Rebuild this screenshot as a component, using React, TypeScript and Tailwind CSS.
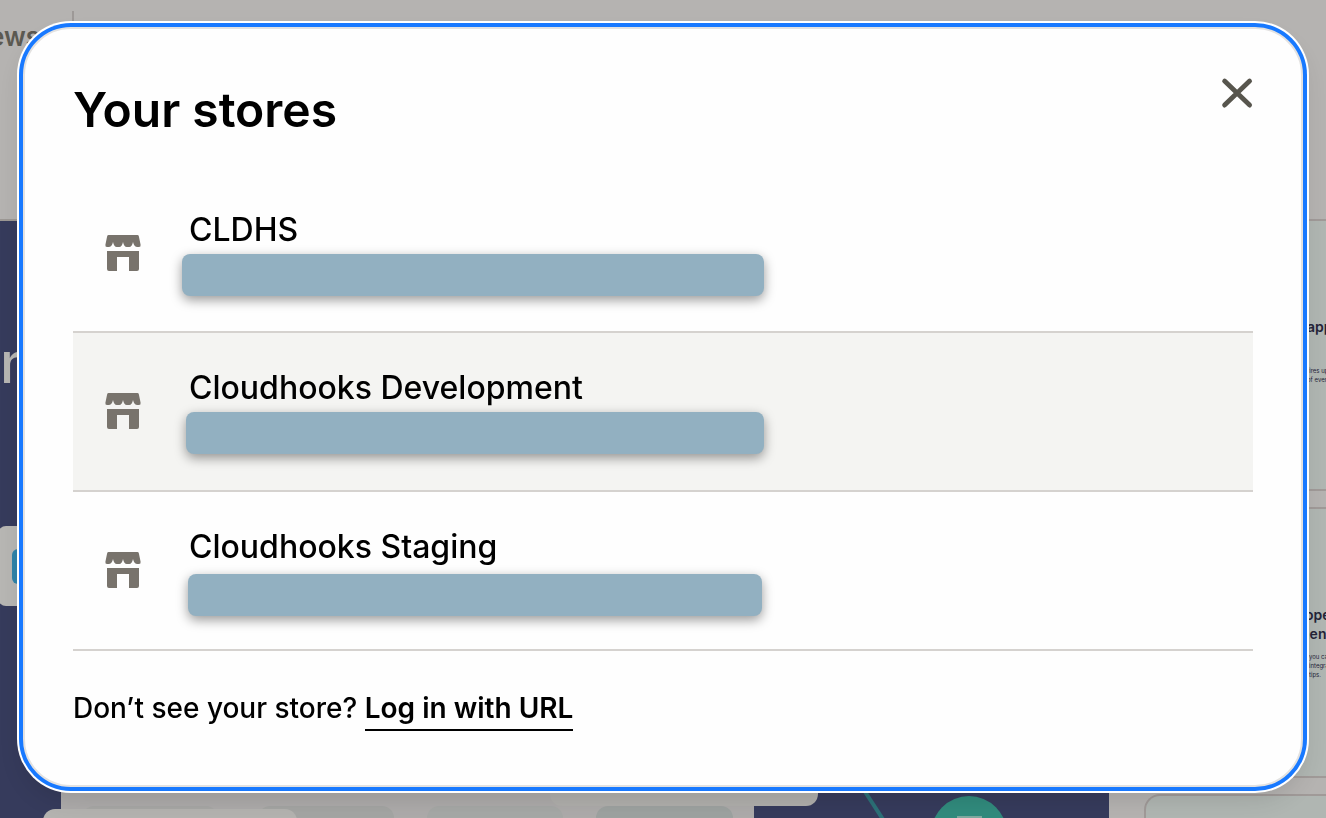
const stores = [
  { name: "CLDHS", row: "h-[156px]", bar: "mt-1 w-[582px]" },
  { name: "Cloudhooks Development", row: "h-[157px] bg-[#f4f4f2]", bar: "mt-1 ml-1 w-[578px]" },
  { name: "Cloudhooks Staging", row: "h-[157px]", bar: "mt-[7px] ml-[6px] w-[574px]" },
];

function StoreIcon() {
  return (
    <svg className="size-9 shrink-0" viewBox="0 0 36 36" fill="#78736c" aria-hidden="true">
      <path d="M3.6 0H32.4Q33.6 0 33.9 1.4L35.6 9.8Q36 12 34 12H32.5Q29 12 28 7Q27 12 24.2 12H21.8Q19 12 18 7Q17 12 14.2 12H11.8Q9 12 8 7Q7 12 3.5 12H2Q0 12 .4 9.8L2.1 1.4Q2.4 0 3.6 0Z" />
      <path d="M2 16H34V34Q34 36 32 36H24V22H12V36H4Q2 36 2 34Z" />
    </svg>
  );
}

function CloseIcon() {
  return (
    <svg className="size-8" viewBox="0 0 32 32" fill="none" stroke="#57554d" strokeWidth="4.8" strokeLinecap="round" aria-hidden="true">
      <path d="M3.6 4.1 28.6 28.1M28.6 4.1 3.6 28.1" />
    </svg>
  );
}

function HeroArt() {
  return (
    <svg className="absolute top-0 left-0 h-full w-[1109px]" viewBox="0 0 1109 597" preserveAspectRatio="xMinYMin slice" aria-hidden="true">
      <rect x="-2" y="305" width="100" height="80" rx="8" fill="#b7b6b3" />
      <rect x="12" y="328" width="60" height="35" rx="6" fill="#2f83a8" />
      <rect x="61" y="420" width="693" height="177" fill="#adabaa" />
      <rect x="82" y="585" width="136" height="40" rx="12" fill="#a7a7a5" />
      <rect x="258" y="585" width="136" height="40" rx="12" fill="#a4a5a3" />
      <rect x="427" y="585" width="136" height="40" rx="12" fill="#a6a8a6" />
      <rect x="596" y="585" width="137" height="40" rx="12" fill="#9da2a0" />
      <rect x="43" y="588" width="254" height="40" rx="12" fill="#b4b3b0" />
      <rect x="550" y="480" width="268" height="105" rx="12" fill="#b0afac" />
      <path d="M862 566 884 600" stroke="#2c7178" strokeWidth="4" />
      <circle cx="969" cy="613" r="38" fill="#318b7d" />
      <rect x="957" y="595" width="25" height="10" fill="#7eaaa0" />
    </svg>
  );
}

function BackgroundPage() {
  return (
    <div className="flex h-screen flex-col overflow-hidden bg-[#b5b3b1]" aria-hidden="true">
      <header className="flex h-[219px] shrink-0 items-start pt-[11px]">
        <div className="flex h-12 w-[74px] justify-end border-r-2 border-[#9d9997] pr-8 pt-[6px] text-[26px] font-semibold text-[#5b5951]">
          news
        </div>
      </header>
      <main className="flex min-h-0 flex-1 gap-[35px]">
        <section className="relative w-[1109px] shrink-0 border-t-2 border-[#9c9894] bg-[#363b5c]">
          <HeroArt />
          <p className="absolute top-[106px] left-0 text-[56px] leading-[72px] font-medium text-[#b7b6b3]">n</p>
        </section>
        <section className="flex min-w-0 flex-1 flex-col gap-4">
          <article className="h-[272px] shrink-0 overflow-hidden rounded-l-2xl border-2 border-r-0 border-[#a09a98] bg-[#b0b6b2] pt-24 pl-[161px] whitespace-nowrap text-[#242438]">
            <h3 className="text-sm leading-5 font-semibold">app</h3>
            <p className="mt-[29px] text-[6px] leading-[9px]">fires up<br />of event</p>
          </article>
          <article className="h-[271px] shrink-0 overflow-hidden rounded-l-2xl border-2 border-r-0 border-[#a09a98] bg-[#b0b6b2] pt-24 pl-[159px] whitespace-nowrap text-[#242438]">
            <h3 className="text-sm leading-[19px] font-semibold">
              oper
              <span className="-ml-2 block">ment</span>
            </h3>
            <p className="mt-[9px] pl-1 text-[6px] leading-[9px]">you can<br />integrat<br />tips.</p>
          </article>
          <article className="h-[272px] shrink-0 rounded-l-2xl border-2 border-r-0 border-[#a09a98] bg-[#b0b6b2]" />
        </section>
      </main>
    </div>
  );
}

export default function App() {
  return (
    <div className="font-[Inter,sans-serif] text-black">
      <BackgroundPage />
      <div className="fixed inset-0 overflow-hidden px-[23px] pt-[27px]">
        <div
          role="dialog"
          aria-modal="true"
          aria-labelledby="stores-title"
          className="rounded-[48px] border-2 border-[#e3e2e1] bg-[#fefefe] px-12 pt-12 pb-[54px] shadow-[0_0_0_4px_#1879ff,0_0_0_6px_#ffffff,0_12px_24px_rgba(0,0,0,0.12)]"
        >
          <div className="flex items-start justify-between">
            <h2 id="stores-title" className="pt-[3px] text-[48px] leading-[60px] font-semibold">Your stores</h2>
            <button type="button" aria-label="Close" className="cursor-pointer">
              <CloseIcon />
            </button>
          </div>
          <ul className="mt-[35px]">
            {stores.map((store) => (
              <li key={store.name} className="border-b-2 border-[#d5d2cf]">
                <a href="#" className={"flex items-start gap-[41px] pt-[35px] pl-8 " + store.row}>
                  <span className="pt-[25px]">
                    <StoreIcon />
                  </span>
                  <span className="flex flex-col">
                    <span className="pl-[7px] text-[32px] leading-10 font-medium">{store.name}</span>
                    <span className={"block h-[42px] rounded-lg bg-[#92b0c1] shadow-[0_4px_12px_rgba(0,0,0,0.4)] " + store.bar} />
                  </span>
                </a>
              </li>
            ))}
          </ul>
          <p className="mt-9 text-[28px] leading-[43px] font-medium">
            Don’t see your store?{" "}
            <a href="#" className="inline-block border-b-2 border-black leading-[42px] font-semibold">Log in with URL</a>
          </p>
        </div>
      </div>
    </div>
  );
}
